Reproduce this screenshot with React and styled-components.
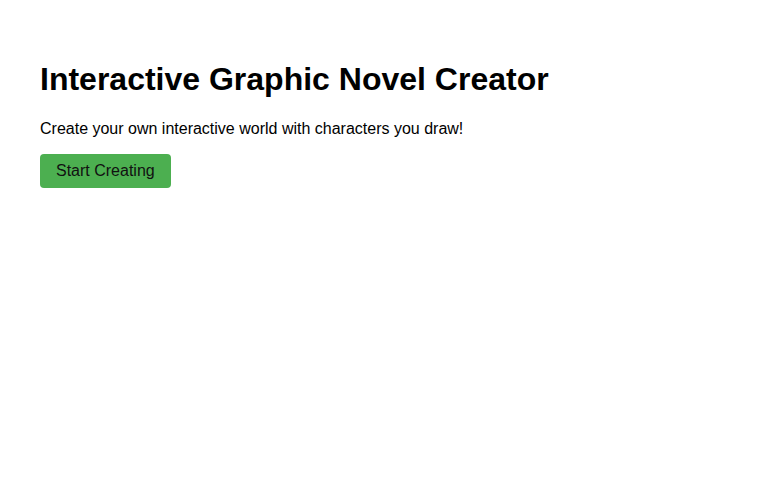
import styled, { createGlobalStyle } from 'styled-components';

const GlobalStyle = createGlobalStyle`
  body {
    margin: 0;
    background: #fff;
    font-family: 'Liberation Sans', Arial, sans-serif;
    color: #000;
  }
`;

const Page = styled.div`
  padding: 40px;
`;

const Title = styled.h1`
  font-size: 32px;
  font-weight: bold;
  margin: 21.44px 0;
`;

const Tagline = styled.p`
  font-size: 16px;
  margin: 16px 0;
`;

const StartButton = styled.button`
  font-family: 'Liberation Sans', Arial, sans-serif;
  font-size: 16px;
  line-height: 18px;
  padding: 8px 16px;
  border: none;
  border-radius: 4px;
  background: #4caf50;
  color: #111;
  cursor: pointer;
`;

const App = () => {
  return (
    <>
      <GlobalStyle />
      <Page>
        <Title>Interactive Graphic Novel Creator</Title>
        <Tagline>Create your own interactive world with characters you draw!</Tagline>
        <StartButton>Start Creating</StartButton>
      </Page>
    </>
  );
};

export default App;
